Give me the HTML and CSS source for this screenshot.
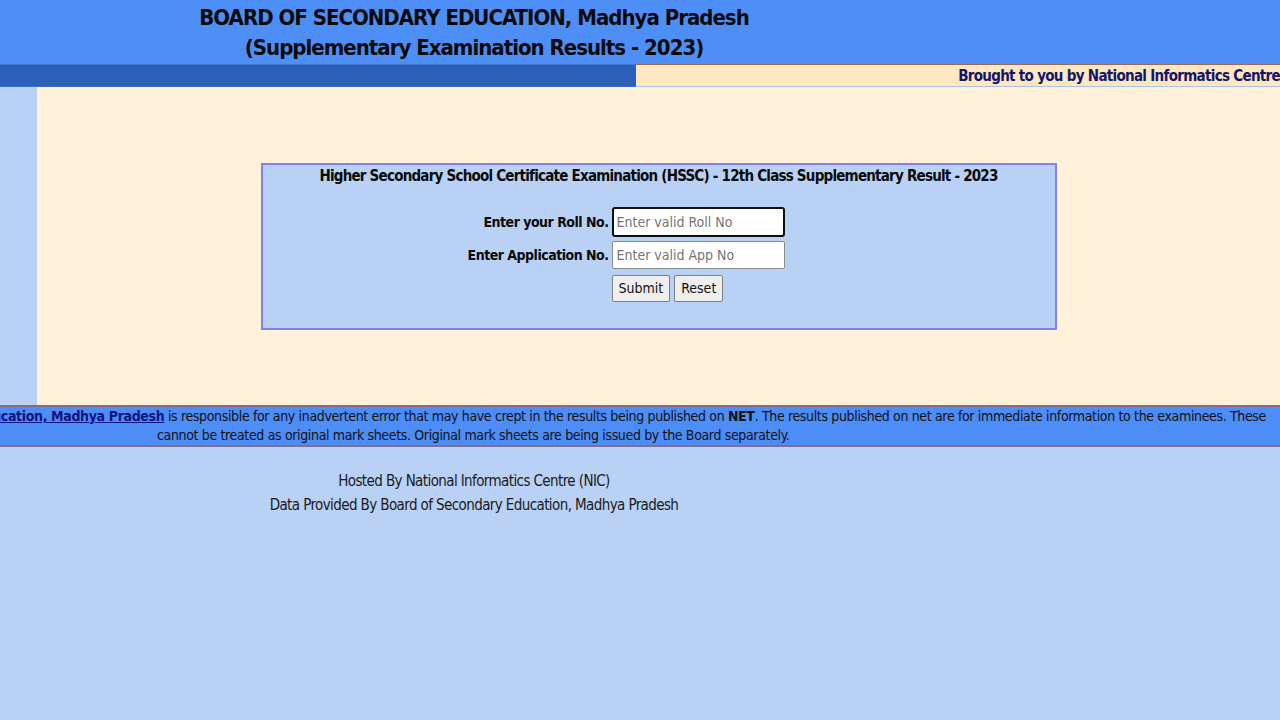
FILE: index.html
```html
<!DOCTYPE html>
<html lang="en">
<head>
<meta charset="utf-8">
<title>MPBSE Supplementary Examination Results 2023</title>
<link rel="stylesheet" href="styles.css">
</head>
<body>
<header class="top">
  <h1 class="top-title">BOARD OF SECONDARY EDUCATION, Madhya Pradesh<br>(Supplementary Examination Results - 2023)</h1>
</header>
<div class="strip">
  <div class="strip-left"></div>
  <div class="strip-right"><span class="credit">Brought to you by National Informatics Centre</span></div>
</div>
<main class="main">
  <div class="side"></div>
  <div class="stage">
    <section class="box">
      <h2 class="box-title">Higher Secondary School Certificate Examination (HSSC) - 12th Class Supplementary Result - 2023</h2>
      <form class="form">
        <label class="lbl" for="roll">Enter your Roll No.</label>
        <input class="fld fld-focus" id="roll" type="text" placeholder="Enter valid Roll No">
        <label class="lbl" for="app">Enter Application No.</label>
        <input class="fld" id="app" type="text" placeholder="Enter valid App No">
        <span></span>
        <div class="btns">
          <button class="btn" type="button">Submit</button>
          <button class="btn" type="reset">Reset</button>
        </div>
      </form>
    </section>
  </div>
</main>
<div class="notice">
  <div class="notice-l1"><span>Neither NIC nor <a class="notice-link" href="#">Board of Secondary Education, Madhya Pradesh</a> is responsible for any inadvertent error that may have crept in the results being published on <b>NET</b>. The results published on net are for immediate information to the examinees. These</span></div>
  <div class="notice-l2">cannot be treated as original mark sheets. Original mark sheets are being issued by the Board separately.</div>
</div>
<footer class="foot">
  <p>Hosted By National Informatics Centre (NIC)</p>
  <p>Data Provided By Board of Secondary Education, Madhya Pradesh</p>
</footer>
</body>
</html>
```
FILE: styles.css
```css
html, body {
  margin: 0;
  padding: 0;
}
body {
  background: #b8d1f5;
  font-family: "DejaVu Sans Condensed", "DejaVu Sans", sans-serif;
  font-stretch: condensed;
  color: #111;
  width: 1280px;
  height: 720px;
  overflow: hidden;
}
.top {
  background: #4e8ef7;
  height: 64px;
  box-sizing: border-box;
  padding-top: 3px;
}
.top-title {
  margin: 0;
  width: 948px;
  text-align: center;
  font-size: 22px;
  line-height: 30px;
  letter-spacing: -1px;
  font-weight: bold;
  color: #0a0a0a;
}
.strip {
  display: flex;
  height: 23px;
}
.strip-left {
  width: 636px;
  background: #2c5fb8;
  border-top: 1px solid #3f78d8;
  border-bottom: 1px solid #3a70cc;
}
.strip-right {
  flex: 1;
  background: #fde8c1;
  border-top: 1px solid #9a6a55;
  border-bottom: 1px solid #a8c4e6;
  display: flex;
  justify-content: flex-end;
  align-items: center;
  overflow: hidden;
}
.credit {
  font-size: 15px;
  letter-spacing: -0.7px;
  font-weight: bold;
  color: #15146c;
  white-space: nowrap;
  padding-top: 1px;
}
.main {
  display: flex;
  height: 318px;
}
.side {
  width: 37px;
  background: #b8d1f5;
}
.stage {
  flex: 1;
  background: #fff1da;
  display: flex;
  align-items: center;
  justify-content: center;
}
.box {
  width: 792px;
  height: 163px;
  border: 2px solid #8282ee;
  background: #b8d1f5;
}
.box-title {
  margin: 0;
  padding-top: 1px;
  text-align: center;
  white-space: nowrap;
  font-size: 15px;
  letter-spacing: -0.78px;
  line-height: 20px;
  font-weight: bold;
  color: #0a0a0a;
}
.form {
  display: grid;
  grid-template-columns: 346px 173px;
  column-gap: 3px;
  row-gap: 4px;
  margin-top: 21px;
  align-items: center;
}
.lbl {
  text-align: right;
  font-weight: bold;
  font-size: 14px;
  letter-spacing: -0.5px;
  color: #0a0a0a;
}
.fld {
  box-sizing: border-box;
  width: 173px;
  height: 28px;
  border: 1px solid #8a8a8a;
  border-radius: 2px;
  background: #fff;
  font-family: inherit;
  font-stretch: condensed;
  font-size: 14px;
  padding: 0 4px;
  margin: 0;
}
.fld::placeholder {
  color: #757575;
}
.fld-focus {
  height: 30px;
  border: 2px solid #101010;
  border-radius: 3px;
  padding: 0 3px;
  outline: none;
}
.btns {
  display: flex;
  gap: 4px;
  margin-top: 2px;
}
.btn {
  height: 27px;
  padding: 0 6px;
  font-family: inherit;
  font-stretch: condensed;
  font-size: 14px;
  color: #111;
  background: #efefef;
  border: 1px solid #808080;
  border-radius: 2px;
}
.notice {
  background: #4d8df7;
  border-top: 2px solid #8c6a82;
  border-bottom: 2px solid #8c6a82;
  overflow: hidden;
  font-size: 14px;
  letter-spacing: -0.35px;
  line-height: 19px;
  color: #111;
}
.notice-l1 {
  display: flex;
  justify-content: flex-end;
  padding-right: 14px;
  white-space: nowrap;
}
.notice-link {
  color: #121280;
  font-weight: bold;
  text-decoration: underline;
}
.notice-l2 {
  padding-left: 157px;
  white-space: nowrap;
}
.foot {
  width: 948px;
  text-align: center;
  padding-top: 22px;
  font-size: 15px;
  letter-spacing: -0.6px;
  line-height: 24px;
  color: #1a1a1a;
}
.foot p {
  margin: 0;
}
```
